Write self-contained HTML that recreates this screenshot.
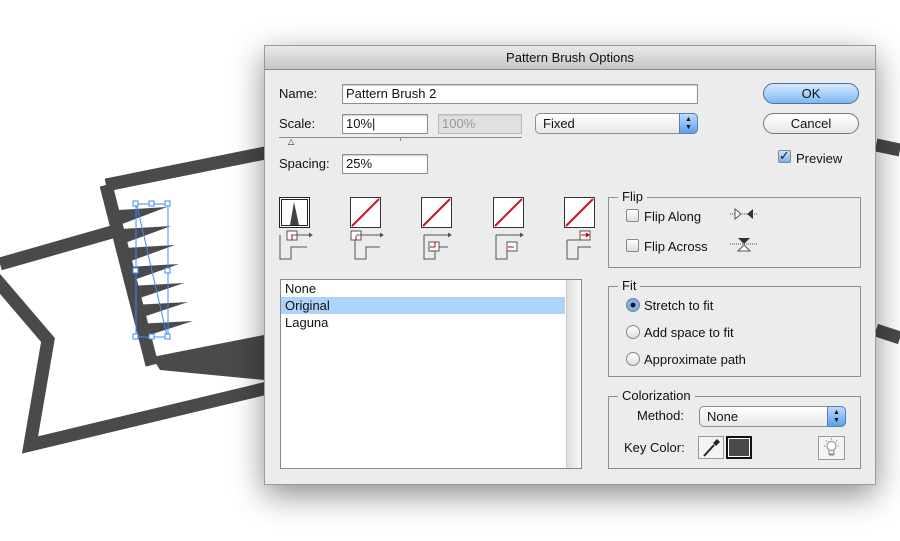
<!DOCTYPE html>
<html><head><meta charset="utf-8"><style>
*{box-sizing:border-box;margin:0;padding:0}
body{width:900px;height:541px;background:#fff;position:relative;overflow:hidden;font-family:"Liberation Sans",sans-serif;font-size:13px;color:#111}
.a{position:absolute}
#dlg{left:264px;top:45px;width:612px;height:440px;background:#ececec;border:1px solid #9a9a9a;box-shadow:0 10px 30px rgba(0,0,0,.45)}
#title{left:0;top:0;width:610px;height:24px;background:linear-gradient(#e9e9e9,#c6c6c6);border-bottom:1px solid #8a8a8a;text-align:center;line-height:24px;font-size:13px}
.inp{background:#fff;border:1px solid #8f8f8f;box-shadow:inset 0 1px 1px #ccc;height:20px;line-height:18px;padding-left:3px}
.pop{border:1px solid #8c8c8c;border-radius:5px;background:linear-gradient(#fff,#e8e8e8);height:21px;line-height:19px;padding-left:7px}
.arr{position:absolute;right:-1px;top:-1px;width:19px;height:21px;border-radius:0 5px 5px 0;background:linear-gradient(#bfdcfb,#5aa0ea);border:1px solid #5a7fb0;font-size:7px;line-height:8px;text-align:center;padding-top:2px;color:#111}
.btn{border:1px solid #777;border-radius:11px;height:21px;text-align:center;line-height:19px;background:linear-gradient(#fff,#e6e6e6)}
.grp{border:1px solid #8e8e8e}
.lg{background:#ececec;padding:0 4px}
.cb{width:13px;height:13px;border:1px solid #888;border-radius:2px;background:linear-gradient(#fff,#ddd)}
.rd{width:14px;height:14px;border:1px solid #888;border-radius:50%;background:linear-gradient(#fff,#ddd)}
.tile{width:31px;height:31px;border:1px solid #333;background:#fff}
</style></head><body>
<svg class="a" style="left:0;top:0" width="900" height="541">
<g fill="none" stroke="#4a4a4c" stroke-width="13" stroke-linejoin="miter">
<polyline points="0,264 112,232"/>
<polyline points="106,185 280,150"/>
<polyline points="106,185 152,365"/>
<polyline points="-5,278 48,340 30,445 280,385"/>
<polyline points="876,145 900,150"/>
<polyline points="876,330 900,338"/>
</g>
<polygon fill="#4a4a4c" points="152,357 264,335 264,380 160,370"/>
<g fill="#4a4a4c">
<polygon points="118,210 167,207 122,224"/><polygon points="121,229 171,226 125,243"/>
<polygon points="124,248 175,245 128,262"/><polygon points="127,267 179,264 131,281"/>
<polygon points="130,286 184,283 134,300"/><polygon points="133,305 188,302 137,319"/>
<polygon points="136,324 193,321 140,338"/>
</g>
<g stroke="#3d8bf0" stroke-width="1" fill="none">
<rect x="136" y="204" width="32" height="133"/><line x1="137" y1="206" x2="167" y2="336"/>
</g>
<g fill="#fff" stroke="#3d8bf0">
<rect x="133" y="201" width="5" height="5"/><rect x="149" y="201" width="5" height="5"/><rect x="165" y="201" width="5" height="5"/>
<rect x="133" y="268" width="5" height="5"/><rect x="165" y="268" width="5" height="5"/>
<rect x="133" y="334" width="5" height="5"/><rect x="149" y="334" width="5" height="5"/><rect x="165" y="334" width="5" height="5"/>
</g>
</svg>
<div id="dlg" class="a">
<div id="title" class="a">Pattern Brush Options</div>
<div class="a" style="left:14px;top:40px">Name:</div>
<div class="a inp" style="left:77px;top:38px;width:356px">Pattern Brush 2</div>
<div class="a" style="left:14px;top:70px">Scale:</div>
<div class="a inp" style="left:77px;top:68px;width:86px">10%|</div>
<div class="a inp" style="left:173px;top:68px;width:84px;background:#e0e0e0;color:#999;border-color:#bbb">100%</div>
<div class="a" style="left:14px;top:91px;width:243px;height:1px;background:#888"></div>
<div class="a" style="left:23px;top:91px;font-size:8px">△</div>
<div class="a" style="left:135px;top:91px;width:1px;height:4px;background:#888"></div>
<div class="a pop" style="left:270px;top:67px;width:163px">Fixed<div class="arr">▲<br>▼</div></div>
<div class="a" style="left:14px;top:110px">Spacing:</div>
<div class="a inp" style="left:77px;top:108px;width:86px">25%</div>
<div class="a btn" style="left:498px;top:37px;width:96px;background:linear-gradient(#d6eaff,#7db8f2);border-color:#4c6f9c">OK</div>
<div class="a btn" style="left:498px;top:67px;width:96px">Cancel</div>
<div class="a cb" style="left:513px;top:104px;background:linear-gradient(#cfe4fb,#7ab1ea);font-size:13px;line-height:10px;color:#123">✓</div>
<div class="a" style="left:531px;top:105px">Preview</div>
<div class="a tile" style="left:14px;top:151px;border:3px double #222"><svg width="25" height="25"><polygon points="12,2 8,25 17,25" fill="#444"/></svg></div>
<svg class="a" style="left:14px;top:184px" width="40" height="30" fill="none" stroke="#555"><path d="M1,5v24h11v-12h16"/><rect x="8" y="1" width="10" height="9" fill="#fff"/><path d="M12,5h18" /><path d="M13,5v5" stroke="#c00"/><path d="M30,3l3,2-3,2" fill="#555"/></svg>
<div class="a tile" style="left:85px;top:151px"><svg width="29" height="29"><line x1="1" y1="28" x2="28" y2="1" stroke="#d01020" stroke-width="2"/></svg></div>
<svg class="a" style="left:85px;top:184px" width="40" height="30" fill="none" stroke="#555"><path d="M5,10v19h11v-12h14"/><rect x="1" y="1" width="10" height="9" fill="#fff"/><path d="M6,5h24"/><path d="M6,6v4" stroke="#c00"/><path d="M30,3l3,2-3,2" fill="#555"/></svg>
<div class="a tile" style="left:156px;top:151px"><svg width="29" height="29"><line x1="1" y1="28" x2="28" y2="1" stroke="#d01020" stroke-width="2"/></svg></div>
<svg class="a" style="left:156px;top:184px" width="40" height="30" fill="none" stroke="#555"><path d="M3,5v24h11v-12h13"/><path d="M3,5h24"/><rect x="8" y="12" width="10" height="9" fill="#fff"/><path d="M9,17h5v-5" stroke="#c00"/><path d="M27,3l3,2-3,2" fill="#555"/></svg>
<div class="a tile" style="left:228px;top:151px"><svg width="29" height="29"><line x1="1" y1="28" x2="28" y2="1" stroke="#d01020" stroke-width="2"/></svg></div>
<svg class="a" style="left:228px;top:184px" width="40" height="30" fill="none" stroke="#555"><path d="M3,5v24h11v-12"/><path d="M3,5h24"/><rect x="14" y="12" width="10" height="9" fill="#fff"/><path d="M15,17h6" stroke="#c00"/><path d="M27,3l3,2-3,2" fill="#555"/></svg>
<div class="a tile" style="left:299px;top:151px"><svg width="29" height="29"><line x1="1" y1="28" x2="28" y2="1" stroke="#d01020" stroke-width="2"/></svg></div>
<svg class="a" style="left:299px;top:184px" width="40" height="30" fill="none" stroke="#555"><path d="M3,10v19h11v-12h13"/><path d="M3,10h14"/><rect x="16" y="1" width="10" height="9" fill="#fff"/><path d="M17,5h6" stroke="#c00"/><path d="M22,3l3,2-3,2" fill="#c00" stroke="#c00"/></svg>
<div class="a" style="left:15px;top:233px;width:302px;height:190px;border:1px solid #888;background:#fff">
<div style="padding-left:4px;height:17px;line-height:17px">None</div>
<div style="padding-left:4px;height:17px;line-height:17px;background:#aed3fb;width:284px">Original</div>
<div style="padding-left:4px;height:17px;line-height:17px">Laguna</div>
<div class="a" style="right:0;top:0;width:15px;height:188px;background:linear-gradient(90deg,#ddd,#fafafa);border-left:1px solid #ccc"></div>
</div>
<div class="a grp" style="left:343px;top:151px;width:253px;height:71px"></div>
<div class="a lg" style="left:353px;top:143px">Flip</div>
<div class="a cb" style="left:361px;top:163px"></div><div class="a" style="left:379px;top:163px">Flip Along</div>
<div class="a cb" style="left:361px;top:193px"></div><div class="a" style="left:379px;top:193px">Flip Across</div>
<svg class="a" style="left:464px;top:160px" width="30" height="16"><path d="M1,8h27" stroke="#555" stroke-dasharray="1,1"/><path d="M6,3v10l6,-5z" fill="#fff" stroke="#555"/><path d="M24,3v10l-6,-5z" fill="#333"/></svg>
<svg class="a" style="left:464px;top:189px" width="30" height="18"><path d="M1,9h27" stroke="#555" stroke-dasharray="1,1"/><path d="M9,3h12l-6,6z" fill="#333"/><path d="M9,16h12l-6,-6z" fill="#fff" stroke="#555"/></svg>
<div class="a grp" style="left:343px;top:240px;width:253px;height:91px"></div>
<div class="a lg" style="left:353px;top:232px">Fit</div>
<div class="a rd" style="left:361px;top:252px;background:radial-gradient(#111 2px,#8fc0f4 3px,#3f8de0)"></div><div class="a" style="left:379px;top:252px">Stretch to fit</div>
<div class="a rd" style="left:361px;top:279px"></div><div class="a" style="left:379px;top:279px">Add space to fit</div>
<div class="a rd" style="left:361px;top:306px"></div><div class="a" style="left:379px;top:306px">Approximate path</div>
<div class="a grp" style="left:343px;top:350px;width:253px;height:73px"></div>
<div class="a lg" style="left:353px;top:342px">Colorization</div>
<div class="a" style="left:372px;top:362px">Method:</div>
<div class="a pop" style="left:434px;top:360px;width:147px">None<div class="arr">▲<br>▼</div></div>
<div class="a" style="left:359px;top:394px">Key Color:</div>
<div class="a" style="left:433px;top:390px;width:26px;height:23px;border:1px solid #999;background:#f4f4f4"><svg width="24" height="21"><path d="M5,19l10,-11" stroke="#222" stroke-width="2"/><path d="M14,6l4,-4 3,3-4,4z" fill="#222"/></svg></div>
<div class="a" style="left:461px;top:390px;width:26px;height:23px;border:2px solid #111;background:#4a4a4c;box-shadow:0 0 0 1px #fff inset"></div>
<div class="a" style="left:553px;top:390px;width:27px;height:24px;border:1px solid #999;background:#f4f4f4"><svg width="25" height="22" fill="none" stroke="#888"><circle cx="12.5" cy="9" r="4.5" fill="#fff"/><path d="M10,13v4h5v-4M10,18h5"/><path d="M12.5,1v1.5M5,9h1.5M18.5,9H20M7,3.5l1,1M18,3.5l-1,1"/></svg></div>
</div>
</body></html>
